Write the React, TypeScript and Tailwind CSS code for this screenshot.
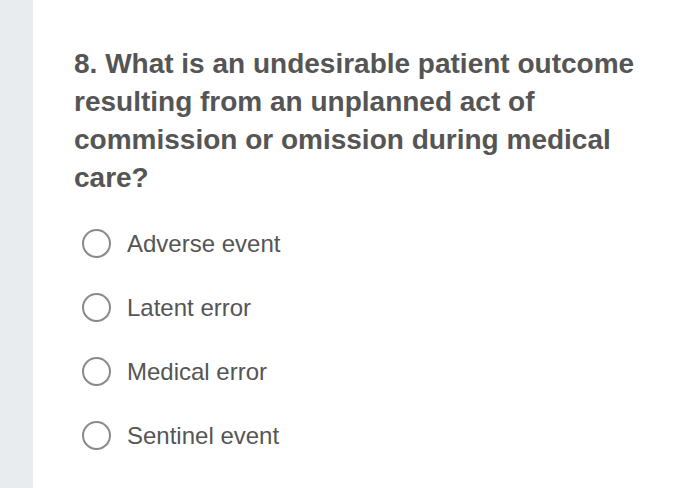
const options = ["Adverse event", "Latent error", "Medical error", "Sentinel event"];

export default function App() {
  return (
    <div className="flex h-[488px] w-[687px] bg-white" style={{ fontFamily: '"Liberation Sans", Arial, sans-serif' }}>
      <div className="w-[33px] shrink-0 bg-[#e8ecef]" />
      <div className="flex-1 pl-[41px] pr-6 pt-[45px]">
        <h2 className="max-w-[580px] text-[28px] font-bold leading-[38px] text-[#555555]">
          8. What is an undesirable patient outcome resulting from an unplanned act of commission or omission during medical care?
        </h2>
        <div className="mt-[32px] flex flex-col gap-[35px] pl-[8px]">
          {options.map((o) => (
            <label key={o} className="flex h-[29px] items-center gap-[16px]">
              <span className="h-[29px] w-[29px] rounded-full border-[2.5px] border-[#8a8a8a]" />
              <span className="text-[24px] text-[#555555]">{o}</span>
            </label>
          ))}
        </div>
      </div>
    </div>
  );
}
